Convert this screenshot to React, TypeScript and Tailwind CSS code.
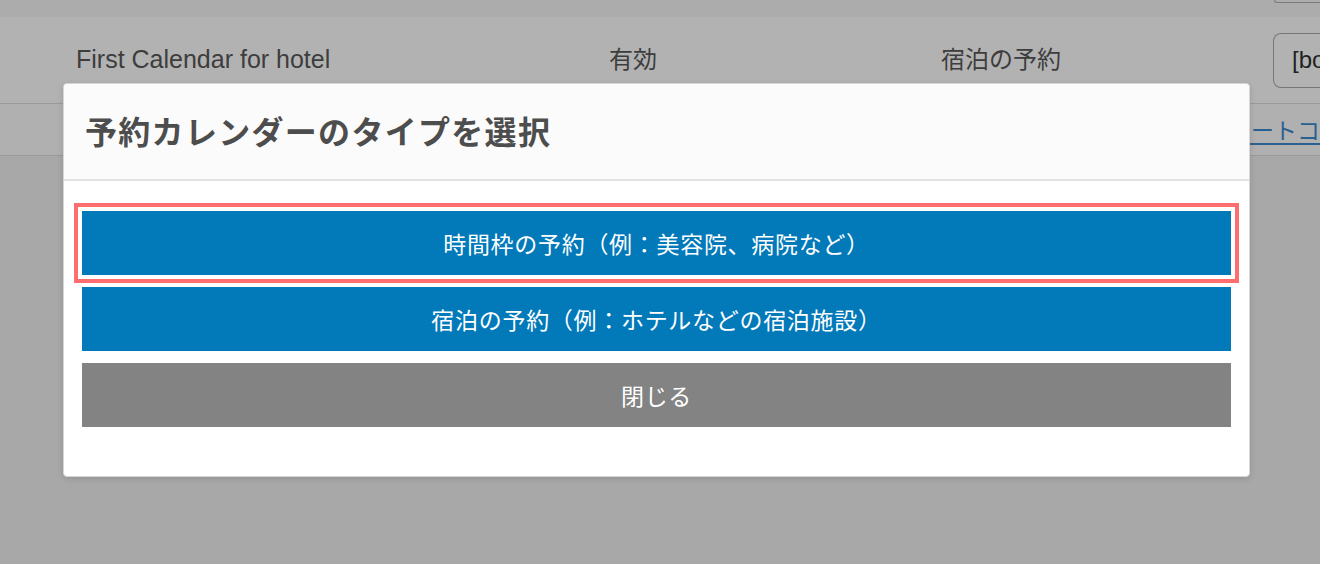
const jp = { fontFamily: '"Noto Sans CJK JP", "Noto Sans", sans-serif' };

function ChoiceButton({ label, tone, focused }: { label: string; tone: 'blue' | 'gray'; focused?: boolean }) {
  const base = 'h-[64px] w-full flex items-center justify-center text-white text-[23px] tracking-[0.7px] leading-none';
  const color = tone === 'blue' ? 'bg-[#0279b9]' : 'bg-[#838383]';
  const ring = focused ? 'outline-[4px] outline-solid outline-[#ff6e6e] outline-offset-[4px]' : '';
  return (
    <button type="button" className={`${base} ${color} ${ring}`} style={jp}>
      {label}
    </button>
  );
}

export default function App() {
  return (
    <div
      className="relative w-[1320px] h-[564px] overflow-hidden bg-[#a8a8a8]"
      style={{ fontFamily: '"Liberation Sans", "Noto Sans CJK JP", sans-serif' }}
    >
      {/* page behind the overlay */}
      <div className="h-[17px] bg-[#acacac] flex justify-end">
        <div className="w-[46px] h-[3px] border-l border-b border-[#7c7c7c] rounded-bl-[6px]" />
      </div>

      <div className="h-[87px] bg-[#b2b2b2] border-b border-[#9a9a9a] flex items-center text-[24px] text-[#3d3d3d]">
        <div className="w-[609px] pl-[76px] shrink-0 text-[25px]">First Calendar for hotel</div>
        <div className="w-[332px] shrink-0">有効</div>
        <div className="w-[332px] shrink-0">宿泊の予約</div>
        <div className="h-[55px] flex-1 flex items-center pl-[18px] border border-r-0 border-[#777] rounded-l-[8px] text-[#222] overflow-hidden whitespace-nowrap">
          [bo
        </div>
      </div>

      <div className="h-[52px] bg-[#b0b0b0] border-b border-[#9a9a9a] flex items-center">
        <a className="ml-[1205px] whitespace-nowrap text-[23px] text-[#2a6090] underline underline-offset-[4px]" style={jp}>
          ショートコード
        </a>
      </div>

      {/* modal */}
      <div className="absolute left-[63px] top-[83px] w-[1187px] bg-white border border-[#d6d6d6] rounded-[4px] shadow-[0_2px_6px_rgba(0,0,0,0.12)]">
        <div className="h-[97px] bg-[#fbfbfb] border-b-2 border-[#e2e2e2] rounded-t-[4px] flex items-center pl-[21px] pb-[4px]">
          <h2 className="text-[32px] font-bold text-[#4d4d4d] tracking-[1.3px]" style={jp}>
            予約カレンダーのタイプを選択
          </h2>
        </div>
        <div className="px-[18px] pt-[30px] pb-[49px] flex flex-col gap-[12px]">
          <ChoiceButton label="時間枠の予約（例：美容院、病院など）" tone="blue" focused />
          <ChoiceButton label="宿泊の予約（例：ホテルなどの宿泊施設）" tone="blue" />
          <ChoiceButton label="閉じる" tone="gray" />
        </div>
      </div>
    </div>
  );
}
